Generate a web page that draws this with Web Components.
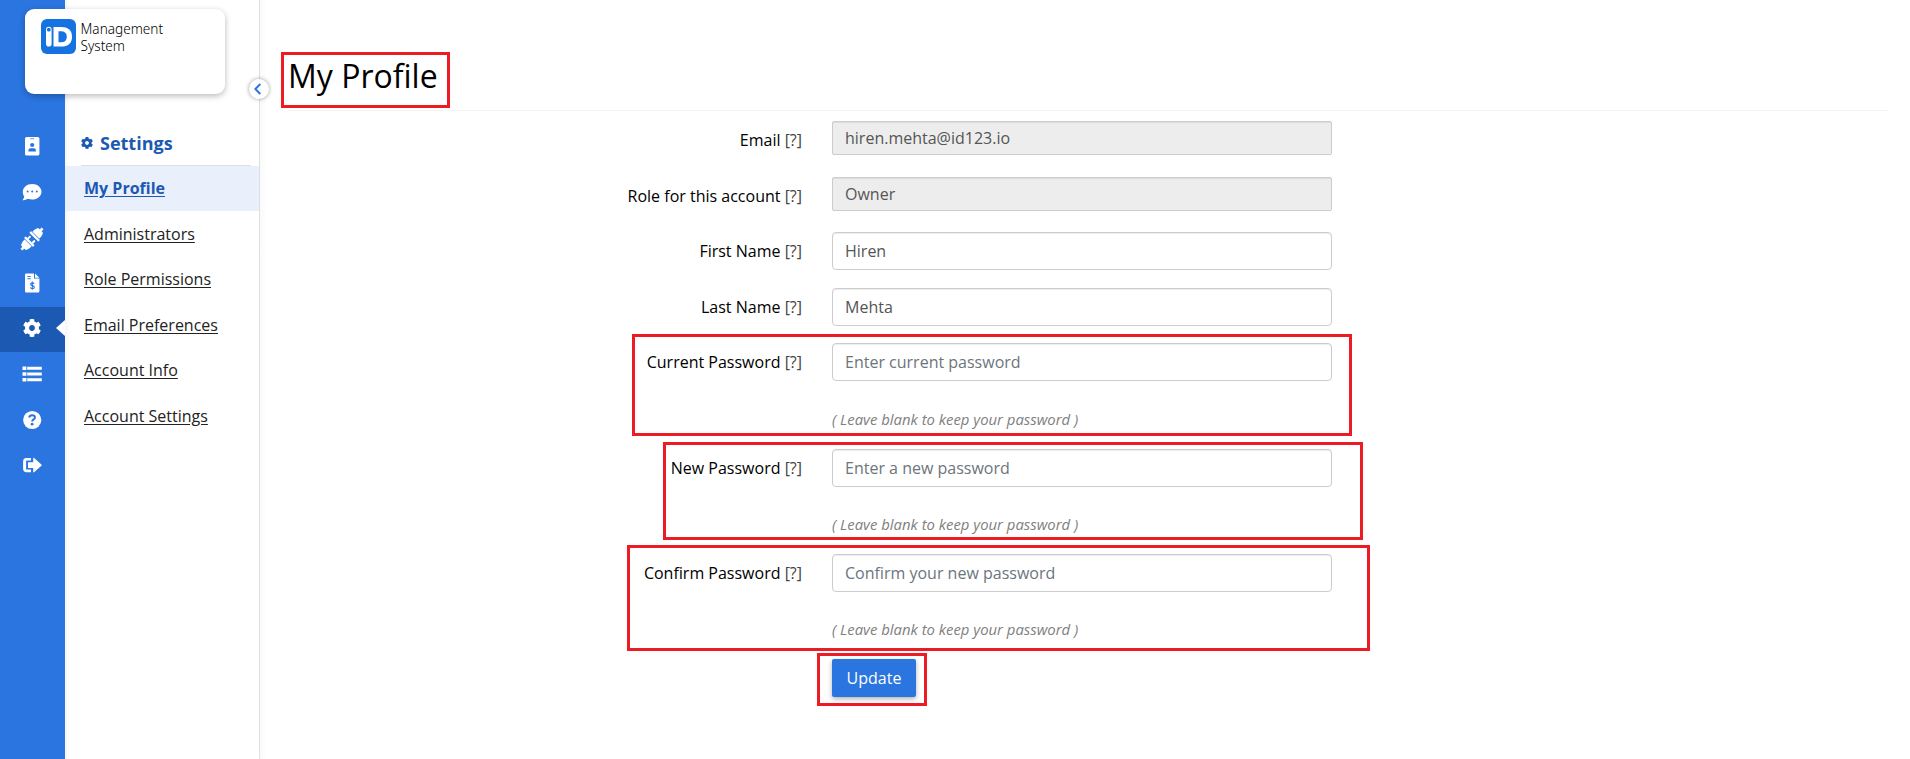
<!DOCTYPE html>
<html lang="en">
<head>
<meta charset="utf-8">
<title>My Profile</title>
<style>
    body{
        margin:0;
        font-family:'Open Sans','Noto Sans',sans-serif;
        font-size:16px;
        color:#000;
        background:#fff;
    }
</style>
</head>
<body>
<app-shell>
    <icon-rail slot="rail"></icon-rail>
    <side-menu slot="menu" heading="Settings">
        <menu-link active>My Profile</menu-link>
        <menu-link>Administrators</menu-link>
        <menu-link>Role Permissions</menu-link>
        <menu-link>Email Preferences</menu-link>
        <menu-link>Account Info</menu-link>
        <menu-link>Account Settings</menu-link>
    </side-menu>
    <page-title>My Profile</page-title>
    <profile-form></profile-form>
    <brand-card slot="overlay"></brand-card>
    <collapse-button slot="overlay"></collapse-button>
    <mark-box slot="overlay" box="281 52 169 56"></mark-box>
    <mark-box slot="overlay" box="632 334 720 102"></mark-box>
    <mark-box slot="overlay" box="663 442 700 98"></mark-box>
    <mark-box slot="overlay" box="627 545 743 106"></mark-box>
    <mark-box slot="overlay" box="817 653 110 53"></mark-box>
</app-shell>

<script>
class BaseElement extends HTMLElement{
    constructor(){
        super();
        this.attachShadow({mode:'open'});
    }

    render(html){
        const template = document.createElement('template');
        template.innerHTML = html;
        this.shadowRoot.replaceChildren(template.content.cloneNode(true));
    }
}

const GEAR = 'M487.4 315.7l-42.6-24.6c4.3-23.2 4.3-47 0-70.2l42.6-24.6c4.9-2.8 7.1-8.6 5.5-14-11.1-35.6-30-67.8-54.7-94.6-3.8-4.1-10-5.1-14.8-2.3L380.8 110c-17.9-15.4-38.5-27.3-60.8-35.1V25.8c0-5.6-3.9-10.5-9.4-11.7-36.7-8.2-74.3-7.8-109.2 0-5.5 1.2-9.4 6.1-9.4 11.7V75c-22.2 7.9-42.8 19.8-60.8 35.1L88.7 85.5c-4.9-2.8-11-1.9-14.8 2.3-24.7 26.7-43.6 58.9-54.7 94.6-1.7 5.4.6 11.2 5.5 14L67.3 221c-4.3 23.2-4.3 47 0 70.2l-42.6 24.6c-4.9 2.8-7.1 8.6-5.5 14 11.1 35.6 30 67.8 54.7 94.6 3.8 4.1 10 5.1 14.8 2.3l42.6-24.6c17.9 15.4 38.5 27.3 60.8 35.1v49.2c0 5.6 3.9 10.5 9.4 11.7 36.7 8.2 74.3 7.8 109.2 0 5.5-1.2 9.4-6.1 9.4-11.7v-49.2c22.2-7.9 42.8-19.8 60.8-35.1l42.6 24.6c4.9 2.8 11 1.9 14.8-2.3 24.7-26.7 43.6-58.9 54.7-94.6 1.5-5.5-.7-11.3-5.6-14.1zM256 336c-44.1 0-80-35.9-80-80s35.9-80 80-80 80 35.9 80 80-35.9 80-80 80z';

// icons are drawn on a 24 unit grid, the cut-outs take the bar colour
const ICONS = {
    badge:`<rect x="5" y="3" width="14.4" height="18.6" rx="1.6"/><g class="cut"><rect x="10.2" y="4.2" width="4" height="1" opacity=".7"/><circle cx="12.2" cy="11" r="2.1"/><path d="M8.5 17.5v-1.2q0-2 2-2h3.4q2 0 2 2v1.2z"/></g>`,
    chat:`<path d="M12.200 4c5.200 0 9.300 3.400 9.300 7.800s-4.200 7.800-9.300 7.800c-1.600 0-3-.3-4.300-.8-1.500 1-3.500 1.600-5.500 1.400 1.100-1.200 1.600-2.500 1.800-3.700C3.300 15.100 2.800 13.600 2.800 11.800 2.800 7.400 6.900 4 12.200 4z"/><g class="cut"><circle cx="7.600" cy="11.600" r="1"/><circle cx="12.200" cy="11.600" r="1"/><circle cx="16.800" cy="11.600" r="1"/></g>`,
    plug:`<g transform="translate(12 14) rotate(-45)"><rect x="-15" y="-1.300" width="4" height="2.600"/><path d="M-12.300-2.600q0-1 1-1.200l3-1.100h2.800v9.800h-2.800l-3-1.100q-1-.2-1-1.200z"/><rect x="-4.900" y="-6.300" width="2.300" height="12.600" rx=".6"/><rect x="-3" y="-4.100" width="4" height="2" rx=".8"/><rect x="-3" y="2.100" width="4" height="2" rx=".8"/><rect x="2.600" y="-6.300" width="2.300" height="12.600" rx=".6"/><path d="M5.500-4.900h2.800l3 1.100q1 .2 1 1.200v5.200q0 1-1 1.200l-3 1.100h-2.800z"/><rect x="11" y="-1.300" width="4" height="2.600"/></g>`,
    invoice:`<path d="M6.200 2.500h7.800v5h5.400v12.700q0 1.300-1.300 1.300h-11.900q-1.200 0-1.200-1.300v-16.400q0-1.300 1.200-1.300zM15 2.500l4.400 4.200h-4.400z"/><g class="cut"><path d="M7.400 5h3.300v.9h-3.300zM7.400 7.300h3.300v.9h-3.300z"/></g><path class="line" d="M14.200 12.700q-.5-.8-1.900-.8-1.700 0-1.700 1.300 0 1 1.800 1.400 1.900.4 1.900 1.600 0 1.400-1.900 1.400-1.600 0-2.100-1M12.300 10.600v8.200"/>`,
    gear:`<g transform="translate(2.700 2.700) scale(.0363)"><path d="${GEAR}"/></g>`,
    list:`<path d="M2.500 4.500h3.900v3.600h-3.900zM2.500 10.200h3.900v3.600h-3.900zM2.500 15.900h3.900v3.600h-3.900zM7.200 4.800h14.600v3h-14.600zM7.200 10.500h14.600v3h-14.600zM7.200 16.200h14.600v3h-14.600z"/>`,
    help:`<circle cx="12.200" cy="12" r="9.100"/><path class="mark" d="M9.100 9.500q.5-2.300 3-2.300 2.800 0 2.800 2.200 0 1.300-1.400 2.100-1.300.7-1.300 1.900"/><circle class="cut" cx="12.100" cy="16.200" r="1.400"/>`,
    exit:`<path d="M11 5v2.600h-4.300q-.6 0-.6.600v7.800q0 .6.600.6h4.300v2.600h-4.500q-3.400 0-3.400-3.400v-7.400q0-3.400 3.400-3.400z"/><path d="M8 9.300h5.200v-4.200q.2-.7.900-.2l7.300 6.600q.5.600 0 1.200l-7.300 6.600q-.7.500-.9-.2v-4.200h-5.200z"/>`
};

class AppShell extends BaseElement{
    connectedCallback(){
        this.render(`
<style>
    :host{
        display:grid;
        grid-template-columns:65px 195px 1fr;
        height:759px;
        position:relative;
        overflow:hidden;
    }
    main{
        border-left:1px solid #e0e0e0;
        margin-left:-1px;
        background:linear-gradient(to right,#fafafa,#fff 7px);
    }
</style>
<slot name="rail"></slot>
<slot name="menu"></slot>
<main><slot></slot></main>
<slot name="overlay"></slot>
`);
    }
}

class IconRail extends BaseElement{
    connectedCallback(){
        const names = ['badge','chat','plug','invoice','gear','list','help','exit'];
        const items = names.map(name => `<a class="${name}"><svg viewBox="0 0 24 24">${ICONS[name]}</svg></a>`).join('');
        this.render(`
<style>
    :host{
        display:block;
        background:#2a75e0;
    }
    nav{
        display:grid;
        grid-auto-rows:45.700px;
        padding-top:124px;
    }
    a{
        display:flex;
        align-items:center;
        justify-content:center;
        box-sizing:border-box;
        padding:0 2px 2px 0;
        --bar:#2a75e0;
    }
    .gear,.exit{
        padding-bottom:3.300px;
    }
    .gear{
        --bar:#1c59b3;
        background:#1c59b3;
        justify-content:flex-end;
        padding-right:0;
    }
    .gear svg{
        margin-right:12px;
    }
    .gear::after{
        content:'';
        border:8px solid transparent;
        border-left:0;
        border-right:9px solid #fff;
    }
    svg{
        width:24px;
        height:24px;
        fill:#fff;
        overflow:visible;
    }
    .cut{
        fill:var(--bar);
    }
    .line,.mark{
        fill:none;
        stroke:var(--bar);
        stroke-width:1.100;
    }
    .mark{
        stroke-width:2;
    }
</style>
<nav>${items}</nav>
`);
    }
}

class SideMenu extends BaseElement{
    connectedCallback(){
        this.render(`
<style>
    :host{
        display:block;
        padding-top:124px;
        background:linear-gradient(to right,#f6f6f6,#fff 5px);
    }
    h2{
        display:flex;
        align-items:center;
        gap:7px;
        height:42px;
        box-sizing:border-box;
        margin:0 9px 0 16px;
        padding-bottom:3px;
        border-bottom:1px solid #dcdfe4;
        color:#1c59b3;
        font-size:18px;
        font-weight:700;
    }
    svg{
        width:12px;
        height:12px;
        fill:#1c59b3;
    }
    nav{
        display:grid;
        grid-auto-rows:45.600px;
        margin-top:-.3px;
    }
</style>
<h2><svg viewBox="12 8 488 496"><path d="${GEAR}"/></svg>${this.getAttribute('heading')}</h2>
<nav><slot></slot></nav>
`);
    }
}

class MenuLink extends BaseElement{
    connectedCallback(){
        this.render(`
<style>
    :host{
        display:flex;
        align-items:center;
        padding:0 0 1.100px 19px;
    }
    :host([active]){
        background:#e9f0fc;
        color:#1c59b3;
        font-weight:700;
    }
    a{
        color:#222;
        text-decoration:underline;
        text-underline-offset:2px;
    }
    :host([active]) a{
        color:inherit;
    }
</style>
<a><slot></slot></a>
`);
    }
}

class BrandCard extends BaseElement{
    connectedCallback(){
        this.render(`
<style>
    :host{
        position:absolute;
        left:25px;
        top:9px;
        z-index:3;
        display:flex;
        gap:4.500px;
        width:200px;
        height:85px;
        box-sizing:border-box;
        padding:10px 0 0 16px;
        border-radius:9px;
        background:#fff;
        box-shadow:0 2px 6px rgba(0,0,0,.28);
    }
    svg{
        width:35px;
        height:35px;
    }
    span{
        margin-top:1px;
        font:300 13.600px/17px 'Noto Sans',sans-serif;
        color:#000;
    }
</style>
<svg viewBox="0 0 35 35">
    <rect width="35" height="35" rx="6" fill="#1473e0"/>
    <path d="M7.800 10.500v14.300" stroke="#fff" stroke-width="5.600" stroke-linecap="round"/>
    <circle cx="7.800" cy="10.700" r="1.900" fill="#1473e0"/>
    <path d="M12.500 8h7.500q11 0 11 9.800t-11 9.800h-7.500zM17.500 12.300v11h2.300q6 0 6-5.500t-6-5.500z" fill="#fff" fill-rule="evenodd"/>
</svg>
<span>Management<br>System</span>
`);
    }
}

class CollapseButton extends BaseElement{
    connectedCallback(){
        this.render(`
<style>
    :host{
        position:absolute;
        left:249px;
        top:79px;
        z-index:3;
        display:flex;
        align-items:center;
        justify-content:center;
        width:20px;
        height:20px;
        padding-right:2px;
        box-sizing:border-box;
        border-radius:50%;
        background:#fff;
        box-shadow:0 0 4px rgba(0,0,0,.4);
    }
    svg{
        width:8px;
        height:12px;
    }
</style>
<svg viewBox="0 0 8 12"><path d="M6.300 1L1.300 6l5 5" fill="none" stroke="#2a75e0" stroke-width="2"/></svg>
`);
    }
}

class PageTitle extends BaseElement{
    connectedCallback(){
        this.render(`
<style>
    :host{
        display:block;
        height:111px;
        box-sizing:border-box;
        margin:0 21px 0 28px;
        padding-top:54px;
        border-bottom:1px solid #f4f4f4;
    }
    h1{
        margin:0;
        font-size:32px;
        line-height:44px;
        font-weight:400;
    }
</style>
<h1><slot></slot></h1>
`);
    }
}

class FormRow extends BaseElement{
    connectedCallback(){
        const label = this.getAttribute('label');
        const hint = this.hasAttribute('hint') ? '<p>( Leave blank to keep your password )</p>' : '';
        const value = this.getAttribute('value') || '';
        const placeholder = this.getAttribute('placeholder') || '';
        const readonly = this.hasAttribute('readonly') ? 'readonly' : '';
        this.render(`
<style>
    :host{
        display:grid;
        grid-template-columns:542px 500px;
        column-gap:30px;
        align-content:start;
    }
    label{
        text-align:right;
        line-height:22px;
        padding-top:8px;
    }
    label span{
        color:#444;
    }
    input{
        width:500px;
        height:38px;
        box-sizing:border-box;
        padding:0 12px;
        border:1px solid #ccc;
        border-radius:4px;
        font:inherit;
        color:#555;
        background:#fff;
        box-shadow:inset 0 1px 1px rgba(0,0,0,.075);
    }
    input::placeholder{
        color:#6c757d;
        opacity:1;
    }
    input[readonly]{
        height:34px;
        border-radius:2px;
        background:#ededed;
    }
    p{
        grid-column:2;
        margin:var(--hint-gap,27px) 0 0;
        font-size:14.880px;
        line-height:20px;
        font-style:italic;
        color:#808080;
    }
</style>
<label>${label} <span>[?]</span></label>
<input value="${value}" placeholder="${placeholder}" ${readonly}>
${hint}
`);
    }
}

class ProfileForm extends BaseElement{
    connectedCallback(){
        this.render(`
<style>
    :host{
        display:block;
        padding-top:10px;
    }
    form{
        display:grid;
        grid-template-rows:56px 55px 56px 55px 106px 105px 105px 38px;
    }
    .current{
        --hint-gap:28px;
    }
    button{
        justify-self:start;
        width:84px;
        margin-left:572px;
        padding:0;
        border:0;
        border-radius:2px;
        font:inherit;
        color:#fff;
        background:#2a75e0;
        box-shadow:0 2px 5px rgba(0,0,0,.3);
    }
</style>
<form>
    <form-row label="Email" value="hiren.mehta@id123.io" readonly></form-row>
    <form-row label="Role for this account" value="Owner" readonly></form-row>
    <form-row label="First Name" value="Hiren"></form-row>
    <form-row label="Last Name" value="Mehta"></form-row>
    <form-row class="current" label="Current Password" placeholder="Enter current password" hint></form-row>
    <form-row label="New Password" placeholder="Enter a new password" hint></form-row>
    <form-row label="Confirm Password" placeholder="Confirm your new password" hint></form-row>
    <button type="button">Update</button>
</form>
`);
    }
}

// red outline laid over the page, box = left top width height
class MarkBox extends BaseElement{
    connectedCallback(){
        const [left, top, width, height] = this.getAttribute('box').split(' ');
        this.render(`
<style>
    :host{
        position:absolute;
        left:${left}px;
        top:${top}px;
        z-index:4;
        width:${width}px;
        height:${height}px;
        box-sizing:border-box;
        border:3px solid #ed1c24;
        pointer-events:none;
    }
</style>
`);
    }
}

customElements.define('app-shell',AppShell);
customElements.define('icon-rail',IconRail);
customElements.define('side-menu',SideMenu);
customElements.define('menu-link',MenuLink);
customElements.define('brand-card',BrandCard);
customElements.define('collapse-button',CollapseButton);
customElements.define('page-title',PageTitle);
customElements.define('form-row',FormRow);
customElements.define('profile-form',ProfileForm);
customElements.define('mark-box',MarkBox);
</script>
</body>
</html>
